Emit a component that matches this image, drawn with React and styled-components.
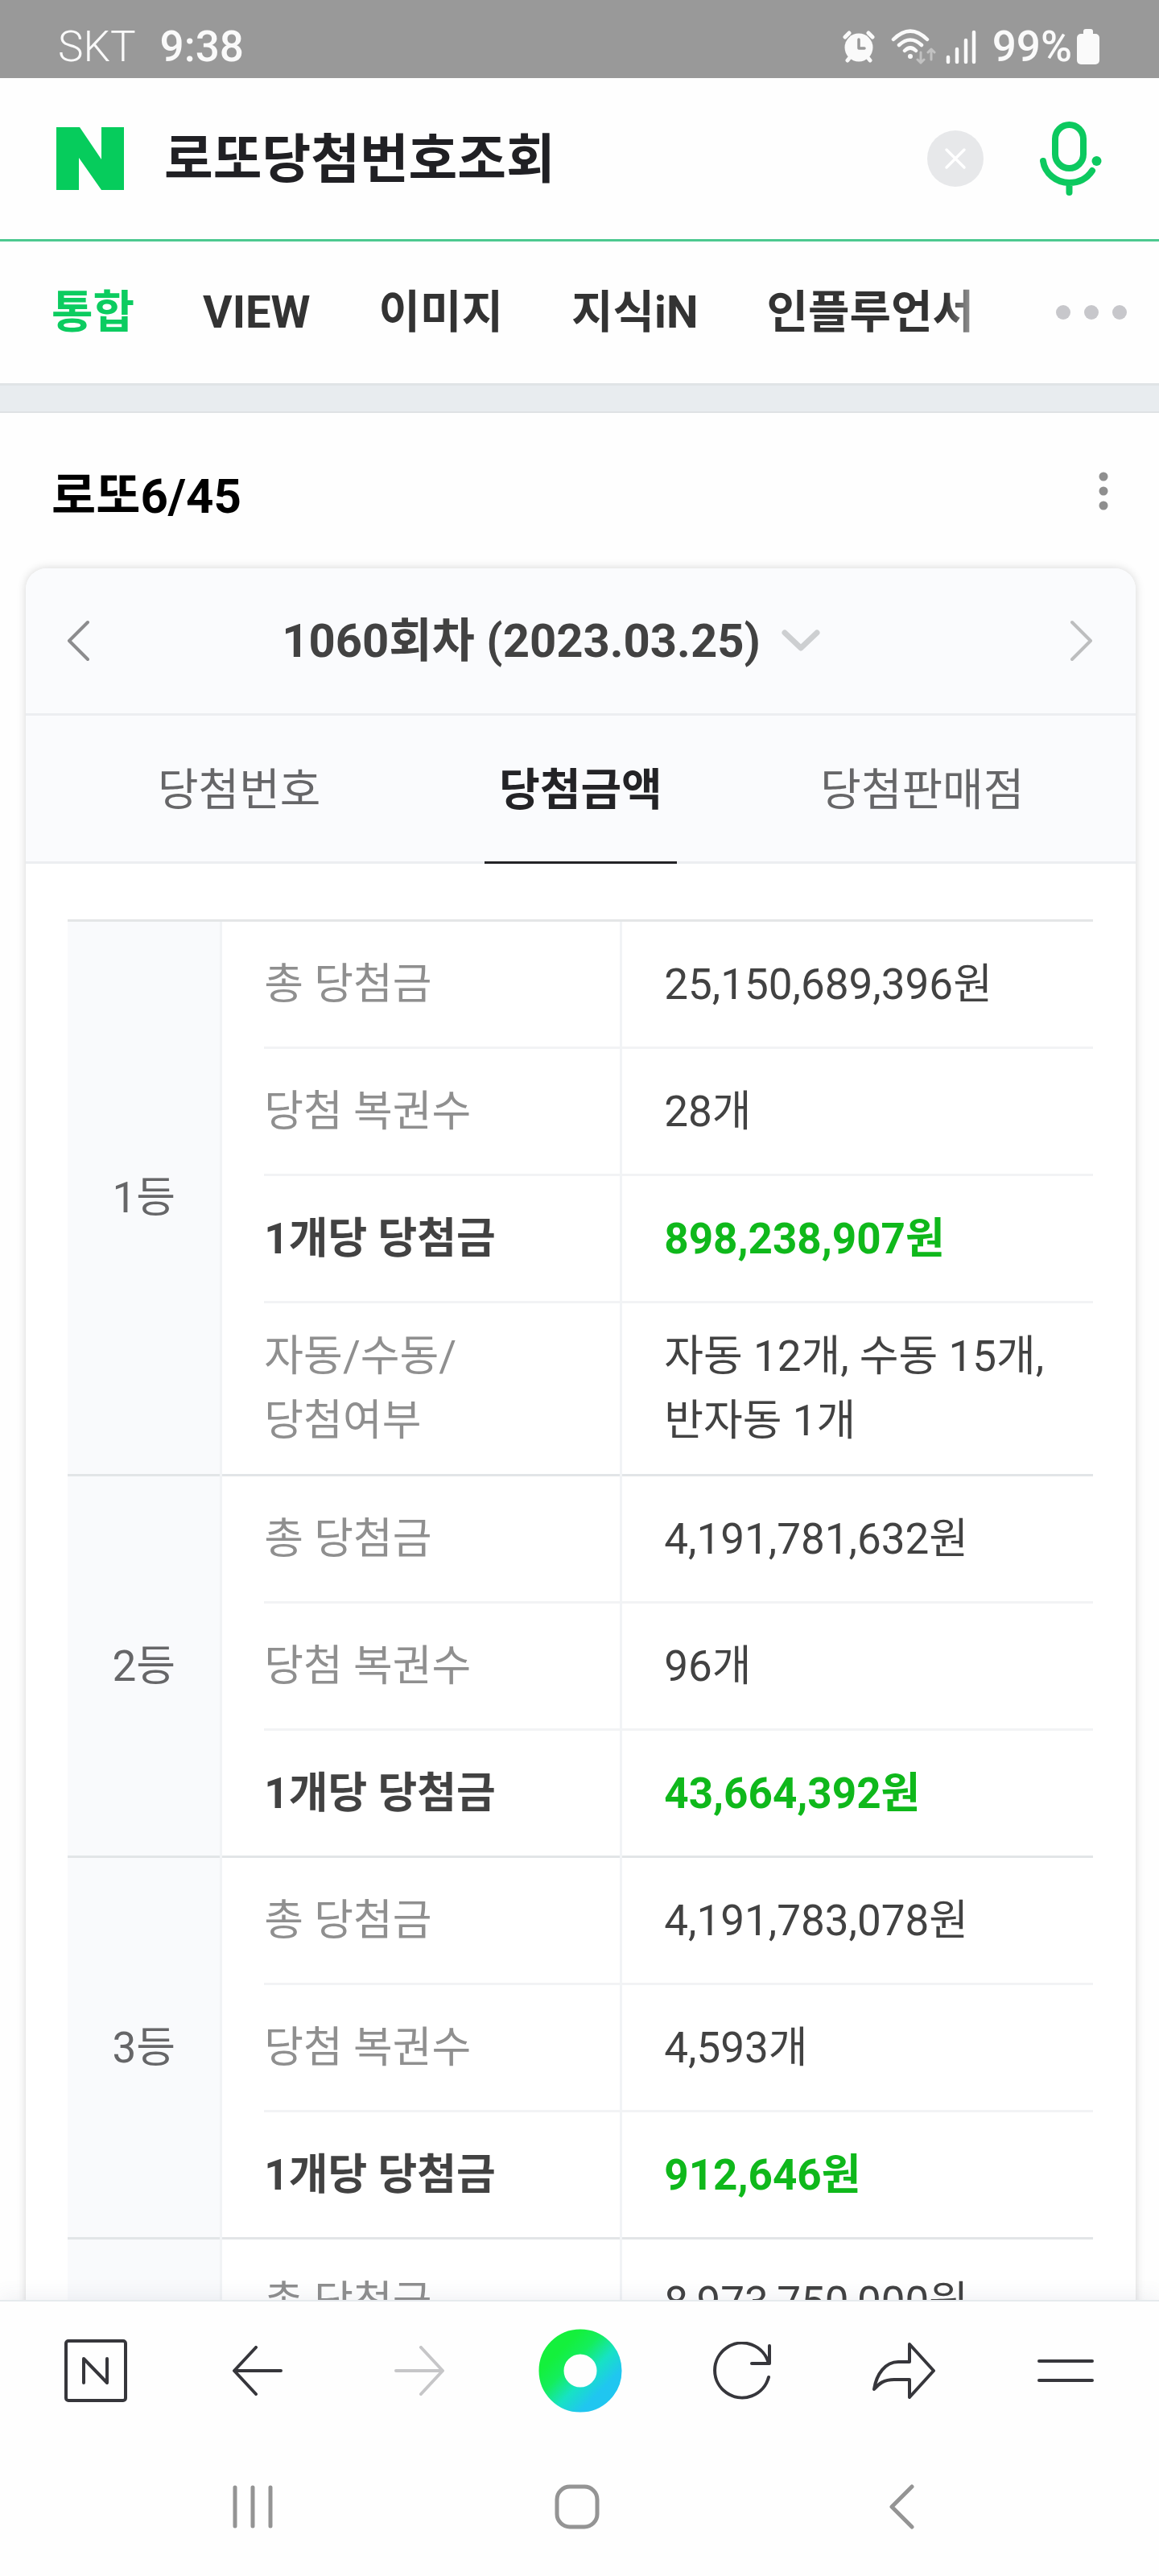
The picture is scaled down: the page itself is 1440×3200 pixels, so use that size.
import React from "react";
import styled, { createGlobalStyle, css } from "styled-components";

const GlobalStyle = createGlobalStyle`
    * {
        box-sizing: border-box;
    }
    body {
        margin: 0;
        background: #fefefe;
        font-family: Roboto, "Noto Sans CJK KR", sans-serif;
        color: #424242;
    }
    button {
        margin: 0;
        padding: 0;
        border: 0;
        background: none;
        font-family: inherit;
        color: inherit;
        cursor: pointer;
    }
    svg {
        display: block;
        fill: none;
        stroke: currentColor;
        stroke-linecap: round;
        stroke-linejoin: round;
    }
`;

const Screen = styled.div`
    display: flex;
    flex-direction: column;
    height: 100vh;
`;

const StatusBar = styled.div`
    display: flex;
    flex: none;
    justify-content: space-between;
    align-items: center;
    height: 97px;
    padding: 18px 74px 0 72px;
    background: #999;
    color: #fafafa;
    font-size: 53px;
    line-height: 60px;
`;

const StatusGroup = styled.div`
    display: flex;
    align-items: center;
    gap: ${(props) => props.$gap}px;
`;

const Carrier = styled.span`
    font-weight: 300;
`;

const Clock = styled.span`
    font-weight: 500;
`;

const Scroller = styled.div`
    flex: 1;
    min-height: 0;
    overflow: hidden auto;
    scrollbar-width: none;
`;

const SearchForm = styled.form`
    display: flex;
    align-items: center;
    height: 203px;
    padding: 0 70px 0 68px;
    border-bottom: 3px solid #4cc990;
`;

const HomeLink = styled.a`
    flex: none;
    margin-right: 48px;
    color: #06cc5c;
`;

const SearchInput = styled.input`
    flex: 1;
    min-width: 0;
    padding: 4px 0 0;
    border: 0;
    outline: 0;
    background: none;
    font-family: inherit;
    font-size: 66px;
    font-weight: 700;
    line-height: 96px;
    color: #202024;
`;

const ClearButton = styled.button`
    display: flex;
    justify-content: center;
    align-items: center;
    width: 70px;
    height: 70px;
    margin-right: 68px;
    border-radius: 50%;
    background: #e7e8ea;
    color: white;
`;

const MicButton = styled.button`
    color: #0cc95f;
`;

const Menu = styled.nav`
    display: flex;
    align-items: center;
    justify-content: space-between;
    height: 176px;
    padding: 0 38px 0 64px;
`;

const MenuList = styled.div`
    display: flex;
    flex: 1;
    gap: 85px;
    overflow: hidden;
    mask-image: linear-gradient(to right, black 1110px, transparent 1180px);
`;

const MenuLink = styled.a`
    flex: none;
    font-size: 56px;
    font-weight: 700;
    line-height: 80px;
    text-decoration: none;
    white-space: nowrap;
    color: ${(props) => (props.$active ? "#0ccc60" : "#333")};
`;

const MoreButton = styled.button`
    flex: none;
    color: #c7c7cb;
`;

const Band = styled.div`
    height: 37px;
    border-top: 3px solid #e0e4e6;
    border-bottom: 2px solid #dfe2e4;
    background: #e8ecef;
`;

const SectionHead = styled.div`
    display: flex;
    justify-content: space-between;
    align-items: center;
    height: 193px;
    padding: 0 59px 0 64px;
`;

const SectionTitle = styled.h2`
    margin: 0;
    padding-top: 14px;
    font-size: 60px;
    font-weight: 700;
    line-height: 80px;
    color: black;
`;

const OptionButton = styled.button`
    color: #8f8f8f;
`;

const Card = styled.section`
    margin: 0 29px 40px 32px;
    border-radius: 26px;
    background: white;
    box-shadow: 0 0 12px rgba(0, 0, 0, .16);
    overflow: hidden;
`;

const RoundBar = styled.div`
    display: flex;
    justify-content: space-between;
    align-items: center;
    height: 183px;
    padding: 0 53px 0 51px;
    border-bottom: 3px solid #eceef1;
    background: #fafbfd;
`;

const ArrowButton = styled.button`
    color: ${(props) => (props.$dim ? "#bdbebf" : "#8c8c8e")};
`;

const RoundButton = styled.button`
    display: flex;
    align-items: center;
    gap: 26px;
    margin-right: 72px;
    font-size: 58px;
    font-weight: 700;
    line-height: 80px;
    white-space: nowrap;
`;

const ChevronSlot = styled.span`
    color: #cdcfd1;
`;

const CardTabs = styled.div`
    display: grid;
    grid-template-columns: repeat(3, 1fr);
    justify-items: center;
    height: 184px;
    padding: 0 53px;
    border-bottom: 3px solid #eceef1;
    background: #fafbfd;
`;

const CardTab = styled.button`
    height: 184px;
    padding: 0 18px;
    font-size: 55px;
    line-height: 80px;
    color: #666668;

    ${(props) => props.$active && css`
        border-bottom: 3px solid #232326;
        padding-top: 3px;
        font-weight: 700;
        color: #232326;
    `}
`;

const TableWrap = styled.div`
    padding: 69px 53px 52px 52px;
`;

const PrizeTable = styled.table`
    width: 100%;
    table-layout: fixed;
    border-collapse: separate;
    border-spacing: 0;
    border-top: 3px solid #e4e6e7;
    font-size: 53px;
    line-height: 80px;
    text-align: left;
`;

const Column = styled.col`
    width: ${(props) => props.$width};
`;

// the rule sits on the lower edge of each cell, behind the column borders
const line = (color, inset) => css`
    background-image: linear-gradient(${color}, ${color});
    background-repeat: no-repeat;
    background-position: ${inset}px 100%;
    background-size: 100% 3px;
    background-origin: padding-box;
    background-clip: padding-box;
`;

const RankCell = styled.th`
    padding: 0 0 3px;
    border-right: 3px solid #f1f3f5;
    background-color: #f9fafc;
    font-weight: 400;
    text-align: center;
    color: #666668;
    ${line("#e2e5e7", 0)}
`;

const LabelCell = styled.th`
    height: ${(props) => (props.$tall ? 215 : 158)}px;
    padding: 0 0 3px 52px;
    border-right: 3px solid #f1f3f5;
    font-weight: ${(props) => (props.$strong ? 700 : 400)};
    color: ${(props) => (props.$strong ? "#424242" : "#8f8f8f")};
    white-space: pre-line;
    ${(props) => (props.$last ? line("#e2e5e7", 0) : line("#f2f3f5", 52))}
`;

const ValueCell = styled.td`
    padding: 0 0 3px 52px;
    font-weight: ${(props) => (props.$strong ? 700 : 400)};
    color: ${(props) => (props.$strong ? "#0fb81b" : "#424242")};
    white-space: pre-line;
    ${(props) => (props.$last ? line("#e2e5e7", 0) : line("#f2f3f5", 0))}
`;

const BottomBars = styled.div`
    position: relative;
    flex: none;
    border-top: 2px solid #e6eaed;
    background: #fefefe;
    box-shadow: 0 -4px 24px rgba(60, 80, 110, .08);
`;

const Toolbar = styled.div`
    display: grid;
    grid-template-columns: repeat(7, 1fr);
    place-items: center;
    height: 172px;
    padding: 0 16px 0 19px;
    color: #36363b;
`;

const ToolButton = styled.button`
    color: ${(props) => (props.$dim ? "#c6c6c8" : "inherit")};
`;

const SystemNav = styled.div`
    display: grid;
    grid-template-columns: repeat(3, 1fr);
    place-items: center;
    height: 169px;
    padding: 0 119px 3px 113px;
    color: #949494;
`;

const menus = ["통합", "VIEW", "이미지", "지식iN", "인플루언서"];

const cardTabs = ["당첨번호", "당첨금액", "당첨판매점"];

const ranks = [
    {
        name: "1등",
        rows: [
            ["총 당첨금", "25,150,689,396원"],
            ["당첨 복권수", "28개"],
            ["1개당 당첨금", "898,238,907원"],
            ["자동/수동/\n당첨여부", "자동 12개, 수동 15개,\n반자동 1개"],
        ],
    },
    {
        name: "2등",
        rows: [
            ["총 당첨금", "4,191,781,632원"],
            ["당첨 복권수", "96개"],
            ["1개당 당첨금", "43,664,392원"],
        ],
    },
    {
        name: "3등",
        rows: [
            ["총 당첨금", "4,191,783,078원"],
            ["당첨 복권수", "4,593개"],
            ["1개당 당첨금", "912,646원"],
        ],
    },
    {
        name: "",
        rows: [
            ["총 당첨금", "8,973,750,000원"],
        ],
    },
];

const AlarmIcon = () => (
    <svg width="40" height="42" viewBox="0 0 40 42" strokeWidth="5">
        <path d="M3 9 L8 4 M37 9 L32 4 M6 38 L10 33 M34 38 L30 33" />
        <circle cx="20" cy="22" r="17.5" fill="currentColor" stroke="none" />
        <path d="M20 12 V23 H27" stroke="#999" strokeWidth="3.5" />
    </svg>
);

const WifiIcon = () => (
    <svg width="56" height="44" viewBox="0 0 56 44" strokeWidth="4.5">
        <path d="M3 13 Q24 -8 45 13 M10 20 Q24 7 38 20 M17 27 Q24 20 31 27" />
        <circle cx="24" cy="34" r="3" fill="currentColor" stroke="none" />
        <path d="M37 29 V42 M33 38 L37 42 L41 38 M50 38 V25 M46 29 L50 25 L54 29" stroke="#c2c2c2" strokeWidth="3" />
    </svg>
);

const SignalIcon = () => (
    <svg width="38" height="44" viewBox="0 0 38 44" strokeWidth="4.5">
        <path d="M3 35 V41 M14 25 V41 M25 14 V41 M35 4 V41" />
    </svg>
);

const BatteryIcon = () => (
    <svg width="28" height="44" viewBox="0 0 28 44">
        <rect x="8" y="0" width="12" height="10" rx="3" fill="currentColor" stroke="none" />
        <rect x="0" y="6" width="28" height="38" rx="5" fill="currentColor" stroke="none" />
    </svg>
);

const NaverLogo = () => (
    <svg width="88" height="78" viewBox="0 0 88 78">
        <path d="M2 0 H31 L58 40 V0 H86 V78 H58 L30 38 V78 H2 Z" fill="currentColor" stroke="none" />
    </svg>
);

const MicIcon = () => (
    <svg width="80" height="92" viewBox="0 0 80 92" strokeWidth="8">
        <rect x="21" y="4" width="35" height="54" rx="17.5" />
        <path d="M6 49 C8 64 22 76 38.5 76 C51 76 61 70 67 61 M38.5 76 V88" />
        <circle cx="72.5" cy="49" r="6" fill="currentColor" stroke="none" />
    </svg>
);

const ToolN = () => (
    <svg width="78" height="78" viewBox="0 0 78 78" strokeWidth="4">
        <rect x="2" y="2" width="74" height="74" rx="3" />
        <path d="M24 54 V24 L53 54 V24" />
    </svg>
);

const ToolArrow = ({ forward }) => (
    <svg width="62" height="62" viewBox="0 0 62 62" strokeWidth="4">
        {forward ? <path d="M2 31 H59 M33 2 L60 31 L33 60" /> : <path d="M60 31 H3 M29 2 L2 31 L29 60" />}
    </svg>
);

const GreenDot = () => (
    <svg width="104" height="104" viewBox="0 0 104 104">
        <defs>
            <linearGradient id="dot" x1="0.15" y1="0.15" x2="0.85" y2="0.85">
                <stop offset="0" stopColor="#14f03c" />
                <stop offset="0.3" stopColor="#14ee5c" />
                <stop offset="0.65" stopColor="#17e2c4" />
                <stop offset="1" stopColor="#20c6f0" />
            </linearGradient>
        </defs>
        <circle cx="52" cy="52" r="36" stroke="url(#dot)" strokeWidth="31" />
    </svg>
);

const ReloadIcon = () => (
    <svg width="74" height="72" viewBox="0 0 74 72" strokeWidth="4">
        <path d="M70 27 A34 34 0 1 0 70 44" />
        <path d="M71 5 V27 H49" />
    </svg>
);

const ShareIcon = () => (
    <svg width="78" height="70" viewBox="0 0 78 70" strokeWidth="4">
        <path d="M2 58 C5 39 16 24 32 24 H46 V2 L76 35 L46 68 V46 H27 C14 46 8 51 2 58 Z" />
    </svg>
);

const MenuIcon = () => (
    <svg width="72" height="30" viewBox="0 0 72 30" strokeWidth="4">
        <path d="M3 3 H69 M3 27 H69" />
    </svg>
);

class SearchHeader extends React.Component {
    render() {
        return <header>
            <SearchForm onSubmit={(e) => e.preventDefault()}>
                <HomeLink href="#home" aria-label="NAVER"><NaverLogo /></HomeLink>
                <SearchInput type="text" aria-label="검색어" defaultValue="로또당첨번호조회" />
                <ClearButton type="button" aria-label="지우기">
                    <svg width="28" height="28" viewBox="0 0 28 28" strokeWidth="3.5">
                        <path d="M3 3 L25 25 M25 3 L3 25" />
                    </svg>
                </ClearButton>
                <MicButton type="button" aria-label="음성검색"><MicIcon /></MicButton>
            </SearchForm>
            <Menu>
                <MenuList>
                    {menus.map((menu, index) => <MenuLink href={"#" + menu} key={menu} $active={index === 0}>{menu}</MenuLink>)}
                </MenuList>
                <MoreButton aria-label="더보기">
                    <svg width="92" height="20" viewBox="0 0 92 20">
                        {[11, 46, 81].map((cx) => <circle key={cx} cx={cx} cy="10" r="9" fill="currentColor" stroke="none" />)}
                    </svg>
                </MoreButton>
            </Menu>
            <Band />
        </header>;
    }
}

const RankRows = ({ rank }) => (
    <tbody>
        {rank.rows.map(([label, value], index) => {
            const strong = index === 2;
            const last = index > 0 && index === rank.rows.length - 1;
            return <tr key={label}>
                {index === 0 && <RankCell scope="rowgroup" rowSpan={rank.rows.length}>{rank.name}</RankCell>}
                <LabelCell scope="row" $strong={strong} $last={last} $tall={index === 3}>{label}</LabelCell>
                <ValueCell $strong={strong} $last={last}>{value}</ValueCell>
            </tr>;
        })}
    </tbody>
);

class LottoCard extends React.Component {
    render() {
        return <Card>
            <RoundBar>
                <ArrowButton aria-label="이전 회차">
                    <svg width="28" height="52" viewBox="0 0 28 52" strokeWidth="4">
                        <path d="M26 3 L3 26 L26 49" />
                    </svg>
                </ArrowButton>
                <RoundButton>
                    1060회차 (2023.03.25)
                    <ChevronSlot>
                        <svg width="48" height="28" viewBox="0 0 48 28" strokeWidth="7">
                            <path d="M4 4 L24 23 L44 4" />
                        </svg>
                    </ChevronSlot>
                </RoundButton>
                <ArrowButton aria-label="다음 회차" $dim>
                    <svg width="28" height="52" viewBox="0 0 28 52" strokeWidth="4">
                        <path d="M2 3 L25 26 L2 49" />
                    </svg>
                </ArrowButton>
            </RoundBar>
            <CardTabs role="tablist">
                {cardTabs.map((tab, index) => <CardTab role="tab" key={tab} aria-selected={index === 1} $active={index === 1}>{tab}</CardTab>)}
            </CardTabs>
            <TableWrap>
                <PrizeTable>
                    <colgroup>
                        <Column $width="15.1%" />
                        <Column $width="39%" />
                        <Column $width="auto" />
                    </colgroup>
                    {ranks.map((rank) => <RankRows rank={rank} key={rank.name} />)}
                </PrizeTable>
            </TableWrap>
        </Card>;
    }
}

const App = () => (
    <Screen>
        <GlobalStyle />
        <StatusBar>
            <StatusGroup $gap={30}>
                <Carrier>SKT</Carrier>
                <Clock>9:38</Clock>
            </StatusGroup>
            <StatusGroup $gap={20}>
                <AlarmIcon />
                <StatusGroup $gap={12}>
                    <WifiIcon />
                    <SignalIcon />
                </StatusGroup>
                <StatusGroup $gap={6}>
                    <Clock>99%</Clock>
                    <BatteryIcon />
                </StatusGroup>
            </StatusGroup>
        </StatusBar>
        <Scroller>
            <SearchHeader />
            <SectionHead>
                <SectionTitle>로또6/45</SectionTitle>
                <OptionButton aria-label="옵션">
                    <svg width="20" height="50" viewBox="0 0 20 50">
                        {[7, 25, 43].map((cy) => <circle key={cy} cx="10" cy={cy} r="5.5" fill="currentColor" stroke="none" />)}
                    </svg>
                </OptionButton>
            </SectionHead>
            <LottoCard />
        </Scroller>
        <BottomBars>
            <Toolbar>
                <ToolButton aria-label="홈"><ToolN /></ToolButton>
                <ToolButton aria-label="뒤로"><ToolArrow /></ToolButton>
                <ToolButton aria-label="앞으로" $dim><ToolArrow forward /></ToolButton>
                <ToolButton aria-label="그린닷"><GreenDot /></ToolButton>
                <ToolButton aria-label="새로고침"><ReloadIcon /></ToolButton>
                <ToolButton aria-label="공유"><ShareIcon /></ToolButton>
                <ToolButton aria-label="메뉴"><MenuIcon /></ToolButton>
            </Toolbar>
            <SystemNav>
                <ToolButton aria-label="최근 앱">
                    <svg width="50" height="54" viewBox="0 0 50 54" strokeWidth="5">
                        <path d="M3 3 V51 M25 3 V51 M47 3 V51" />
                    </svg>
                </ToolButton>
                <ToolButton aria-label="홈 화면">
                    <svg width="56" height="56" viewBox="0 0 56 56" strokeWidth="5">
                        <rect x="3" y="3" width="50" height="50" rx="16" />
                    </svg>
                </ToolButton>
                <ToolButton aria-label="이전">
                    <svg width="32" height="56" viewBox="0 0 32 56" strokeWidth="5">
                        <path d="M29 3 L4 28 L29 53" />
                    </svg>
                </ToolButton>
            </SystemNav>
        </BottomBars>
    </Screen>
);

export default App;
